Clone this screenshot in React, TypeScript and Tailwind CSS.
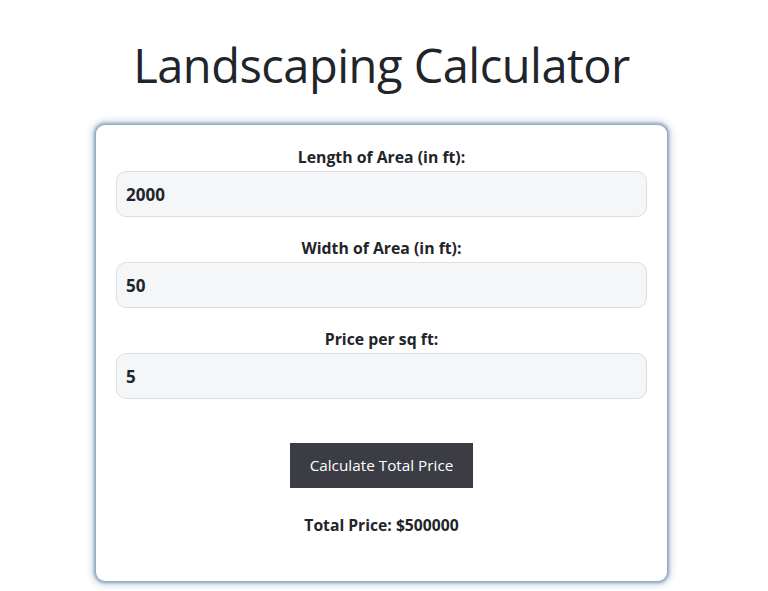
export default function App() {
  const fields = [
    { label: 'Length of Area (in ft):', value: '2000' },
    { label: 'Width of Area (in ft):', value: '50' },
    { label: 'Price per sq ft:', value: '5' },
  ]

  return (
    <div
      className="flex min-h-[591px] flex-col items-center bg-white pr-[5px] text-[#212529]"
      style={{ fontFamily: '"Open Sans", "Noto Sans", sans-serif' }}
    >
      <h1 className="mt-[33px] text-[47px] font-normal leading-[64px] tracking-[-0.5px]">
        Landscaping Calculator
      </h1>

      <div className="mt-[28px] w-[571px] rounded-[9px] bg-white px-[20px] pt-[22px] pb-[45px] shadow-[0_0_3px_2px_#8ea5bf,0_0_9px_3px_#c3d0e0]">
        {fields.map((field) => (
          <div key={field.label} className="mb-[21px] flex flex-col">
            <label className="mb-[3px] text-center text-[15.8px] font-bold leading-[21px]">
              {field.label}
            </label>
            <input
              readOnly
              value={field.value}
              className="h-[46px] rounded-[10px] border border-[#dcdee2] bg-[#f5f6f8] px-[9px] text-[17px] font-bold text-[#212529] outline-none"
            />
          </div>
        ))}

        <div className="mt-[44px] flex flex-col items-center">
          <button className="h-[45px] w-[183px] bg-[#3c3d44] text-[15.3px] text-white">
            Calculate Total Price
          </button>
          <p className="mt-[27px] text-[15.7px] font-bold leading-[21px]">
            Total Price: $500000
          </p>
        </div>
      </div>
    </div>
  )
}
